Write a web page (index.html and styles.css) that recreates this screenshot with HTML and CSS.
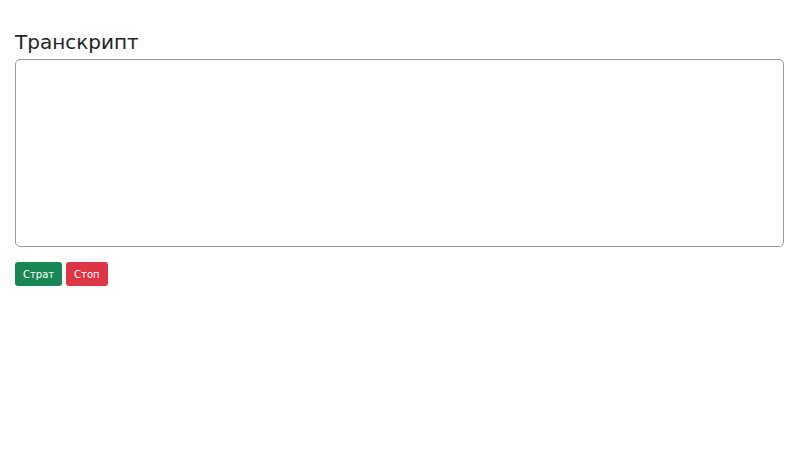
FILE: index.html
```html
<!DOCTYPE html>
<html lang="ru">
<head>
  <meta charset="UTF-8">
  <title>Транскрипт</title>
  <link rel="stylesheet" href="styles.css">
</head>
<body>
  <div class="container">
    <h2 class="title">Транскрипт</h2>
    <textarea id="transcript" class="transcript"></textarea>
    <div class="controls">
      <button class="btn btn-start">Страт</button>
      <button class="btn btn-stop">Стоп</button>
    </div>
  </div>
</body>
</html>
```

FILE: styles.css
```css
body { margin: 0; font-family: "DejaVu Sans", sans-serif; color: #212529; background: #fff; }
.container { padding: 0 16px 0 15px; }
.title { font-size: 20px; font-weight: normal; margin: 0; padding-top: 30px; line-height: 24px; height: 29px; }
.transcript {
  display: block;
  width: 100%;
  height: 188px;
  box-sizing: border-box;
  border: 1px solid #999;
  border-radius: 5px;
  resize: none;
  margin: 0;
}
.controls { display: flex; gap: 4px; margin-top: 15px; }
.btn {
  height: 24px;
  padding: 0 8px;
  font-family: "DejaVu Sans", sans-serif;
  font-size: 10px;
  color: #fff;
  border: none;
  border-radius: 3px;
}
.btn-start { background-color: #198754; }
.btn-stop { background-color: #dc3545; }
```
